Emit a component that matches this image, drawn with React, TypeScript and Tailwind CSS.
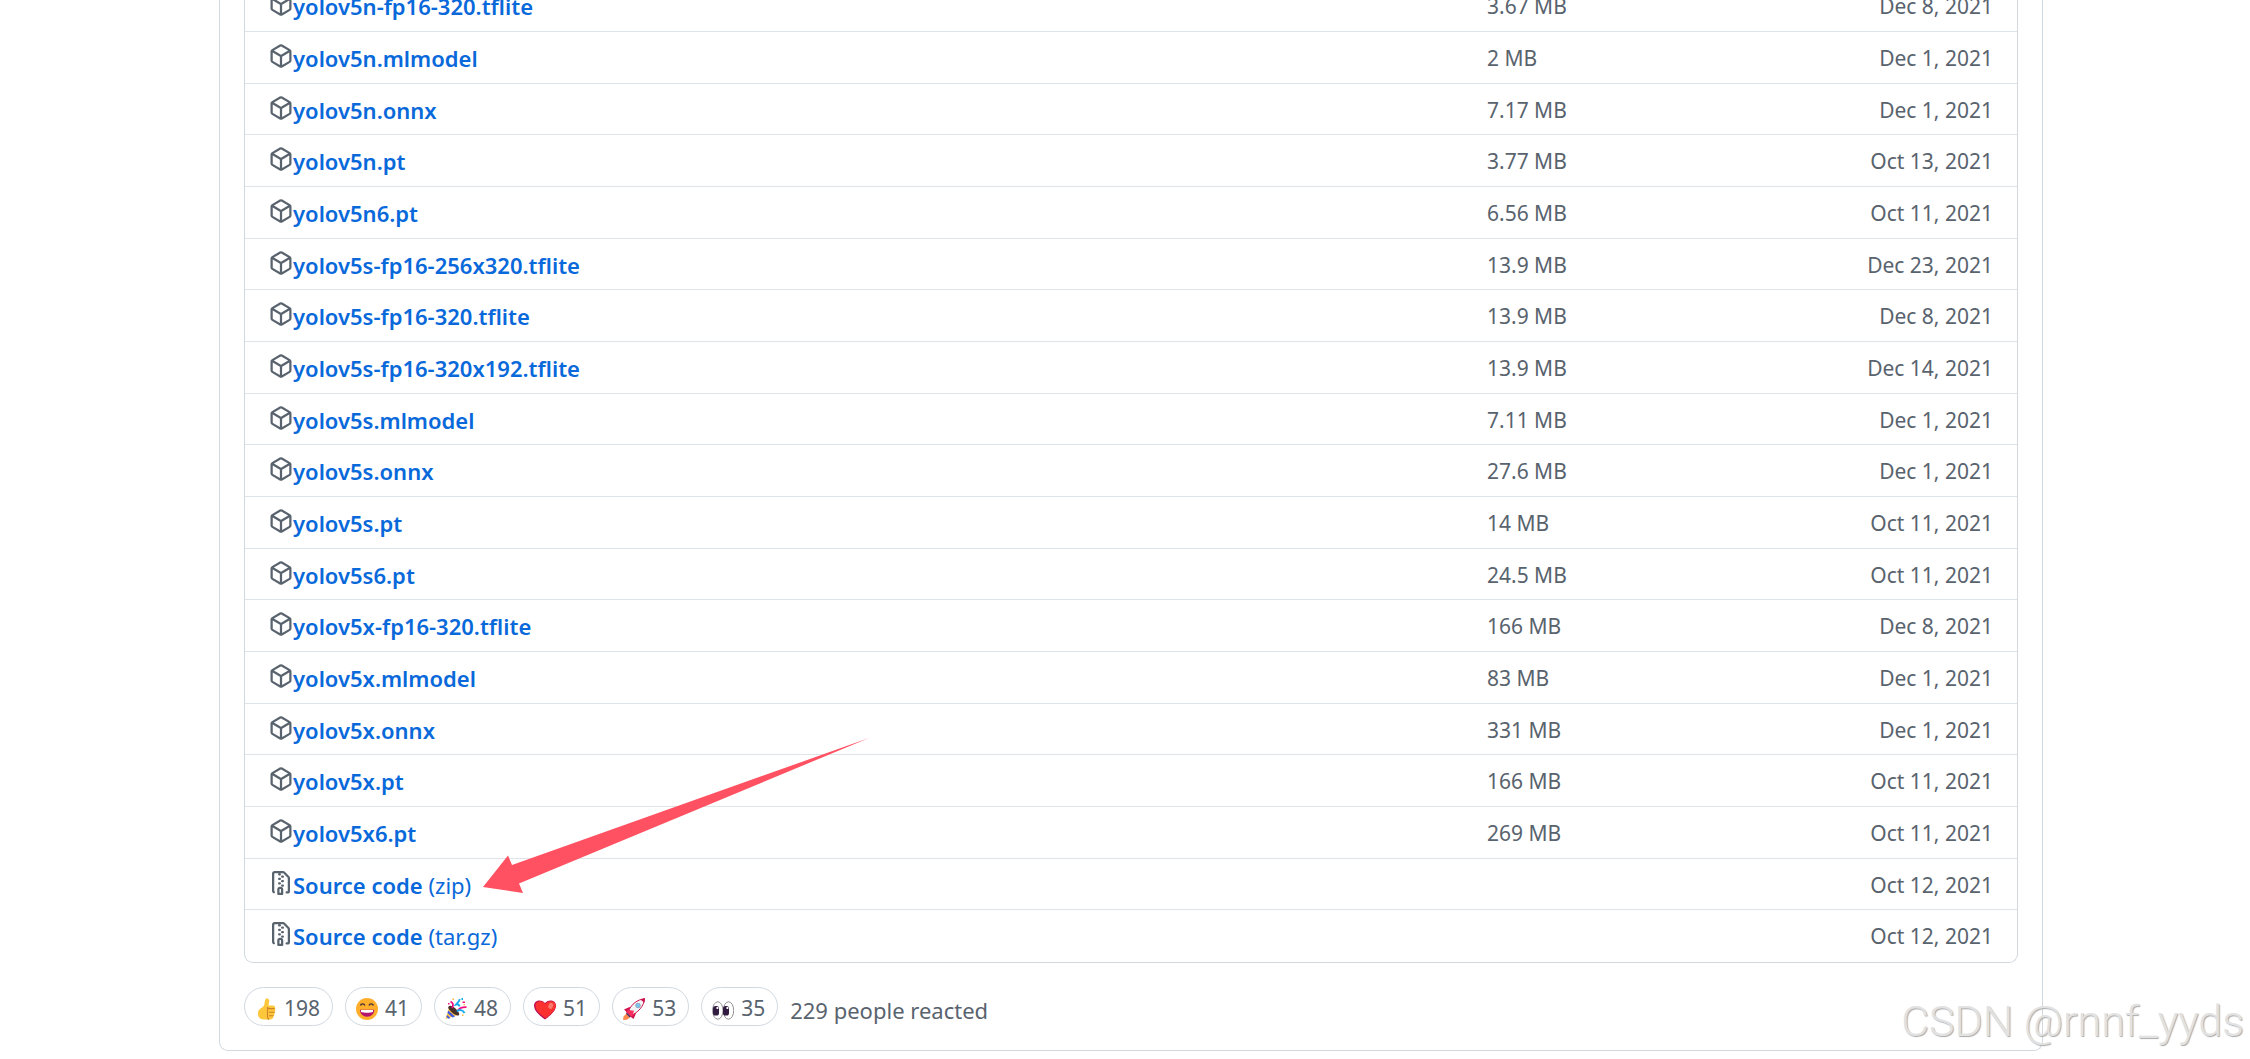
import React from "react";

type Asset = { name: string; format?: string; size?: string; date: string };

const assets: Asset[] = [
  { name: "yolov5n-fp16-320.tflite", size: "3.67 MB", date: "Dec 8, 2021" },
  { name: "yolov5n.mlmodel", size: "2 MB", date: "Dec 1, 2021" },
  { name: "yolov5n.onnx", size: "7.17 MB", date: "Dec 1, 2021" },
  { name: "yolov5n.pt", size: "3.77 MB", date: "Oct 13, 2021" },
  { name: "yolov5n6.pt", size: "6.56 MB", date: "Oct 11, 2021" },
  { name: "yolov5s-fp16-256x320.tflite", size: "13.9 MB", date: "Dec 23, 2021" },
  { name: "yolov5s-fp16-320.tflite", size: "13.9 MB", date: "Dec 8, 2021" },
  { name: "yolov5s-fp16-320x192.tflite", size: "13.9 MB", date: "Dec 14, 2021" },
  { name: "yolov5s.mlmodel", size: "7.11 MB", date: "Dec 1, 2021" },
  { name: "yolov5s.onnx", size: "27.6 MB", date: "Dec 1, 2021" },
  { name: "yolov5s.pt", size: "14 MB", date: "Oct 11, 2021" },
  { name: "yolov5s6.pt", size: "24.5 MB", date: "Oct 11, 2021" },
  { name: "yolov5x-fp16-320.tflite", size: "166 MB", date: "Dec 8, 2021" },
  { name: "yolov5x.mlmodel", size: "83 MB", date: "Dec 1, 2021" },
  { name: "yolov5x.onnx", size: "331 MB", date: "Dec 1, 2021" },
  { name: "yolov5x.pt", size: "166 MB", date: "Oct 11, 2021" },
  { name: "yolov5x6.pt", size: "269 MB", date: "Oct 11, 2021" },
  { name: "Source code", format: "(zip)", date: "Oct 12, 2021" },
  { name: "Source code", format: "(tar.gz)", date: "Oct 12, 2021" },
];

function PackageIcon() {
  return (
    <svg viewBox="0 0 16 16" className="mt-px size-6 shrink-0 fill-[#59636e]" aria-hidden="true">
      <path d="m8.878.392 5.25 3.045c.54.314.872.89.872 1.514v6.098a1.75 1.75 0 0 1-.872 1.514l-5.25 3.045a1.75 1.75 0 0 1-1.756 0l-5.25-3.045A1.75 1.75 0 0 1 1 11.049V4.951c0-.624.332-1.201.872-1.514L7.122.392a1.75 1.75 0 0 1 1.756 0ZM7.875 1.69l-4.63 2.685L8 7.133l4.755-2.758-4.63-2.685a.248.248 0 0 0-.25 0ZM2.5 5.677v5.372c0 .09.047.171.125.216l4.625 2.683V8.432Zm6.25 8.271 4.625-2.683a.25.25 0 0 0 .125-.216V5.677L8.75 8.432Z" />
    </svg>
  );
}

function ZipIcon() {
  return (
    <svg viewBox="0 0 16 16" className="mt-px size-6 shrink-0 fill-[#59636e]" aria-hidden="true">
      <path d="M3.5 1.75v11.5c0 .09.048.173.126.217a.75.75 0 0 1-.752 1.298A1.748 1.748 0 0 1 2 13.25V1.75C2 .784 2.784 0 3.75 0h5.586c.464 0 .909.185 1.237.513l2.914 2.914c.329.328.513.773.513 1.237v8.586A1.75 1.75 0 0 1 12.25 15h-.5a.75.75 0 0 1 0-1.5h.5a.25.25 0 0 0 .25-.25V4.664a.25.25 0 0 0-.073-.177L9.513 1.573a.25.25 0 0 0-.177-.073H7.25a.75.75 0 0 1 0 1.5h-.5a.75.75 0 0 1 0-1.5h-3a.25.25 0 0 0-.25.25Zm3.75 8.75h.5c.966 0 1.75.784 1.75 1.75v3a.75.75 0 0 1-.75.75h-2.5a.75.75 0 0 1-.75-.75v-3c0-.966.784-1.75 1.75-1.75ZM6 5.25a.75.75 0 0 1 .75-.75h.5a.75.75 0 0 1 0 1.5h-.5A.75.75 0 0 1 6 5.25Zm.75 2.25h.5a.75.75 0 0 1 0 1.5h-.5a.75.75 0 0 1 0-1.5ZM8 6.75A.75.75 0 0 1 8.75 6h.5a.75.75 0 0 1 0 1.5h-.5A.75.75 0 0 1 8 6.75ZM8.75 3h.5a.75.75 0 0 1 0 1.5h-.5a.75.75 0 0 1 0-1.5ZM8 9.75A.75.75 0 0 1 8.75 9h.5a.75.75 0 0 1 0 1.5h-.5A.75.75 0 0 1 8 9.75Zm-1 2.5v2.25h1v-2.25a.25.25 0 0 0-.25-.25h-.5a.25.25 0 0 0-.25.25Z" />
    </svg>
  );
}

/* Red pointer whose tip sits beside the zip link */
function Arrow() {
  return (
    <svg viewBox="0 0 386 155" className="pointer-events-none absolute -top-[132px] left-[214px] h-[155px] w-[386px]" aria-hidden="true">
      <path d="M0 149 25 117.500 29 127 386 0 36 145.500 40 155Z" fill="#ff5161" />
    </svg>
  );
}

function Emoji({ children }: { children: React.ReactNode }) {
  return (
    <svg viewBox="0 0 22 22" className="size-[22px] shrink-0" aria-hidden="true">
      {children}
    </svg>
  );
}

const reactions = [
  {
    label: "thumbs up",
    count: 198,
    icon: (
      <Emoji>
        <path d="M11.500.5c1.800-.4 3 1 2.700 3L13.500 7.500H18c1.600 0 2.400 1.400 1.900 2.600.7.800.7 2 0 2.800.5.900.4 2-.5 2.700.3 1-.1 1.900-.9 2.400.1 2-1.200 3.500-3.500 3.500H9c-2.500 0-4.600-1-5.500-3-.8-2-.7-5 .5-6.500C5.500 10 8 9.500 9 7.500c.9-2 .5-6.500 2.500-7Z" fill="#fcc73b" />
        <path d="M19.500 10.600h-5.300c-1.200 0-1.500-.6-1.700-1.600v9.500c0 1.500.5 2.500 1.500 3M19.500 14.200h-5.500M18.500 17.800h-4.500" fill="none" stroke="#cf8124" strokeWidth="1.100" />
      </Emoji>
    ),
  },
  {
    label: "laugh",
    count: 41,
    icon: (
      <Emoji>
        <circle cx="11" cy="11" r="11" fill="#ffae2c" />
        <path d="M4.500 7.500C5 5.300 8 5.300 8.800 7.500M13 7.500c.7-2.200 3.700-2.200 4.400 0" fill="none" stroke="#3a2a3a" strokeWidth="1.400" />
        <path d="M4 11.800h14.200c0 4-2.900 6.900-7.100 6.900S4 15.800 4 11.800Z" fill="#b4136e" />
        <path d="M5 12h12v2c-3 1-9 1-12 0Z" fill="#fff" />
      </Emoji>
    ),
  },
  {
    label: "hooray",
    count: 48,
    icon: (
      <Emoji>
        <path d="M4.500 8.500 .5 21 14 16.500Z" fill="#fdc23e" />
        <path d="m3.300 12.500 6.700 6-2.500.9-5.100-4.500ZM2 17l3.500 3-2 .7L1.400 19Z" fill="#3f5ae0" />
        <path d="M3.500 8.500C5 6.500 8.500 8.500 11 11s4 5.200 2.800 6.300S9 16.500 6.500 14 2.500 10 3.500 8.500Z" fill="#4a302b" />
        <path d="M5.500 3.500c2.700 1.300 3.300 3.500 1.500 6.500M13 12.500c1.500-3 4-3.500 8.500-3.300" fill="none" stroke="#f00f83" strokeWidth="1.800" />
        <path d="M14.500 1c.5 2.500-2 3.500-3.500 5.500 1.800-.5 3.300.3 3.500 2M12 13.500c2-2.500 6-1.500 7.500 1.500" fill="none" stroke="#13a9ec" strokeWidth="1.900" />
        <path d="M3 5h1.500v1.500H3ZM17.500 3.500H20V5h-2.500Z" fill="#f00f83" />
        <path d="M7.500.5H9V2H7.500ZM18.500 6H20v1.300h-1.500ZM17 16.500h1.500V18H17Z" fill="#fdb83e" />
        <path d="M16.500 0H18v2h-1.500Z" fill="#13a9ec" />
      </Emoji>
    ),
  },
  {
    label: "heart",
    count: 51,
    icon: (
      <Emoji>
        <path d="M11 21.500C7 18.500 0 13.500 0 7.500 0 2.500 7 .5 11 5c4-4.500 11-2.500 11 2.500 0 6-7 11-11 14Z" fill="#c11256" />
        <path d="M11.600 20.300C8 17.500 1.500 13 1.500 7.500 1.500 3 8 1.500 11.400 5.800 15 1.500 21.800 3 21.800 7.500c0 5.500-6.700 10-10.200 12.800Z" fill="#fa312f" />
        <rect x="14.500" y="5" width="4.500" height="6" rx="2" transform="rotate(25 17 8)" fill="#f8786c" />
      </Emoji>
    ),
  },
  {
    label: "rocket",
    count: 53,
    icon: (
      <Emoji>
        <path d="M3.500 15.500.5 18.500 0 22l4-.3 3.500-2.700Z" fill="#ff8a4b" />
        <path d="M3 13.500 1 11.500 6.500 9 13 15.500 10.500 21l-2-1.500Z" fill="#d0154f" />
        <path d="M6 12C8.500 6.500 14 1.500 21.500.8 21 8 15.500 13.500 10.200 16.500Z" fill="#f2f3f5" stroke="#d0154f" strokeWidth="1" />
        <path d="M17.500 1.500 22 0l-.7 4.800Z" fill="#c9124c" />
        <path d="m5 12 6 .8-1.500 5.200-3 .5-3.500-3.500Z" fill="#fb2f5e" />
        <path d="m4 14.500 4 4-1.300 1-3.700-3.800Z" fill="#5b3b6b" />
        <circle cx="15" cy="7.500" r="2.300" fill="#76c8f8" stroke="#8c98a5" strokeWidth=".8" />
      </Emoji>
    ),
  },
  {
    label: "eyes",
    count: 35,
    icon: (
      <Emoji>
        <ellipse cx="16.500" cy="12.500" rx="5.200" ry="8.700" fill="#fff" stroke="#909090" strokeWidth="1" />
        <ellipse cx="5.800" cy="12.500" rx="5.200" ry="8.700" fill="#fff" stroke="#909090" strokeWidth="1" />
        <rect x="1" y="8" width="6" height="9.500" rx="2.600" fill="#321b41" />
        <rect x="11" y="8" width="6" height="9.500" rx="2.600" fill="#321b41" />
        <path d="M4.500 9h1.800v2H4.500ZM14.500 9h1.800v2h-1.800Z" fill="#fff" />
      </Emoji>
    ),
  },
];

function AssetRow({ asset }: { asset: Asset }) {
  return (
    <li className="grid h-[52px] grid-cols-[1218fr_200fr_306fr] items-start border-t border-[#dfe4e8] px-6 pt-[11px] last:h-[53px] nth-[3n]:h-[51px]">
      <div className="relative flex items-start">
        {asset.format ? <ZipIcon /> : <PackageIcon />}
        <a href="#" className="text-[22px] leading-[31px] whitespace-nowrap text-[#0969da]">
          <span className="font-semibold">{asset.name}</span>
          {asset.format && <span> {asset.format}</span>}
        </a>
        {asset.format === "(zip)" && <Arrow />}
      </div>
      <span>{asset.size}</span>
      <span className="text-right">{asset.date}</span>
    </li>
  );
}

export default function App() {
  return (
    <div className="relative h-screen overflow-hidden bg-white font-['Noto_Sans',sans-serif] text-[21px] leading-[31px] text-[#59636e]">
      <main className="-mt-[21px] mr-[207px] ml-[219px] rounded-b-[9px] border border-t-0 border-[#d1d9e0] px-6 pb-6">
        <ul className="rounded-b-[9px] border border-t-0 border-[#d1d9e0]">
          {assets.map((asset) => (
            <AssetRow key={asset.name + (asset.format ?? "")} asset={asset} />
          ))}
        </ul>
        <div className="mt-6 flex items-center gap-3">
          {reactions.map((r) => (
            <button
              key={r.label}
              type="button"
              aria-label={`${r.label}: ${r.count}`}
              className="flex h-[39px] items-center gap-[7px] rounded-full border border-[#d1d9e0] pt-1 pr-3 pl-2.5"
            >
              {r.icon}
              <span>{r.count}</span>
            </button>
          ))}
          <span className="pt-2 text-[22px] leading-[31px]">229 people reacted</span>
        </div>
      </main>
      <div className="pointer-events-none absolute right-1.5 bottom-3 font-['Roboto',sans-serif] text-[43px] leading-[52px] font-light text-[#e2e2e2] [text-shadow:1px_1px_1px_#aaa]">
        CSDN @rnnf_yyds
      </div>
    </div>
  );
}
